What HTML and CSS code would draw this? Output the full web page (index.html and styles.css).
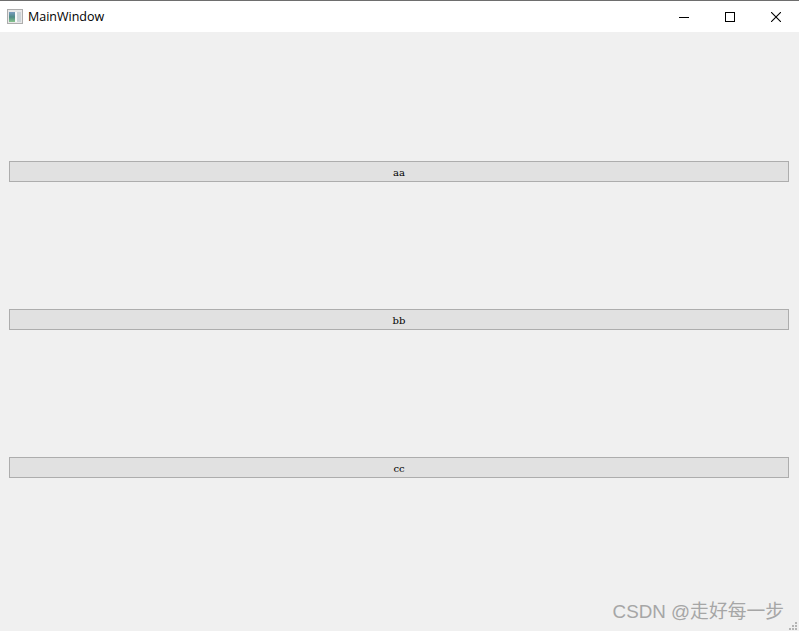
FILE: index.html
```html
<!DOCTYPE html>
<html lang="en">
  <head>
    <meta charset="UTF-8" />
    <meta name="viewport" content="width=device-width, initial-scale=1.0" />
    <title>MainWindow</title>
    <link rel="stylesheet" href="styles.css">
  </head>
  <body>
    <div class="titlebar">
      <svg class="app-icon" width="16" height="16" viewBox="0 0 16 16">
        <defs>
          <linearGradient id="pane" x1="0" y1="0" x2="0" y2="1">
            <stop offset="0" stop-color="#7a9cc0" />
            <stop offset="0.5" stop-color="#4f8a86" />
            <stop offset="1" stop-color="#86c48c" />
          </linearGradient>
        </defs>
        <rect x="0.5" y="0.5" width="15" height="14" fill="#e8e8e8" stroke="#adadad" />
        <rect x="2" y="3" width="6" height="10" fill="url(#pane)" />
        <rect x="8" y="3" width="2" height="10" fill="#f8f8f8" />
        <rect x="10" y="3" width="4" height="10" fill="#ccd4d8" />
      </svg>
      <span class="window-title">MainWindow</span>
      <div class="window-controls">
        <div class="control">
          <svg width="10" height="10" viewBox="0 0 10 10"><path d="M0 5.5H10" stroke="#000" fill="none" /></svg>
        </div>
        <div class="control">
          <svg width="10" height="10" viewBox="0 0 10 10"><rect x="0.5" y="0.5" width="9" height="9" stroke="#000" fill="none" /></svg>
        </div>
        <div class="control">
          <svg width="10" height="10" viewBox="0 0 10 10"><path d="M0 0L10 10M10 0L0 10" stroke="#000" stroke-width="1.1" fill="none" /></svg>
        </div>
      </div>
    </div>

    <div class="content">
      <button class="push-button">aa</button>
      <button class="push-button">bb</button>
      <button class="push-button">cc</button>

      <div class="watermark">CSDN @走好每一步</div>
      <svg class="size-grip" width="9" height="9" viewBox="0 0 9 9">
        <path d="M6 0h2v2H6zM3 3h2v2H3zM6 3h2v2H6zM0 6h2v2H0zM3 6h2v2H3zM6 6h2v2H6z" fill="#b4b4b4" />
      </svg>
    </div>
  </body>
</html>
```

FILE: styles.css
```css
html,
body {
  height: 100%;
}
body {
  margin: 0;
  display: flex;
  flex-direction: column;
  overflow: hidden;
  font-family: "Open Sans", "Noto Sans", sans-serif;
  background: #f0f0f0;
}
.titlebar {
  flex: none;
  height: 31px;
  display: flex;
  align-items: center;
  background: white;
  border-top: 1px solid #6e6e6e;
}
.app-icon {
  margin-left: 7px;
  margin-right: 5px;
}
.window-title {
  font-family: "Open Sans", sans-serif;
  font-size: 12.5px;
  color: #000;
}
.window-controls {
  margin-left: auto;
  display: flex;
}
.control {
  width: 46px;
  height: 31px;
  display: flex;
  align-items: center;
  justify-content: center;
}
.content {
  flex: 1;
  position: relative;
  display: flex;
  flex-direction: column;
  gap: 127px;
  padding: 129px 10px 0 9px;
}
.push-button {
  height: 21px;
  padding: 1px 0 0;
  border: 1px solid #adadad;
  background: #e1e1e1;
  color: #000;
  font-family: "DejaVu Serif", serif;
  font-size: 10px;
}
.watermark {
  position: absolute;
  right: 15px;
  bottom: 8px;
  font-family: "Liberation Sans", "Noto Sans CJK SC", sans-serif;
  font-size: 18.8px;
  color: #a6a6a6;
}
.size-grip {
  position: absolute;
  right: 1px;
  bottom: 0;
}
```
